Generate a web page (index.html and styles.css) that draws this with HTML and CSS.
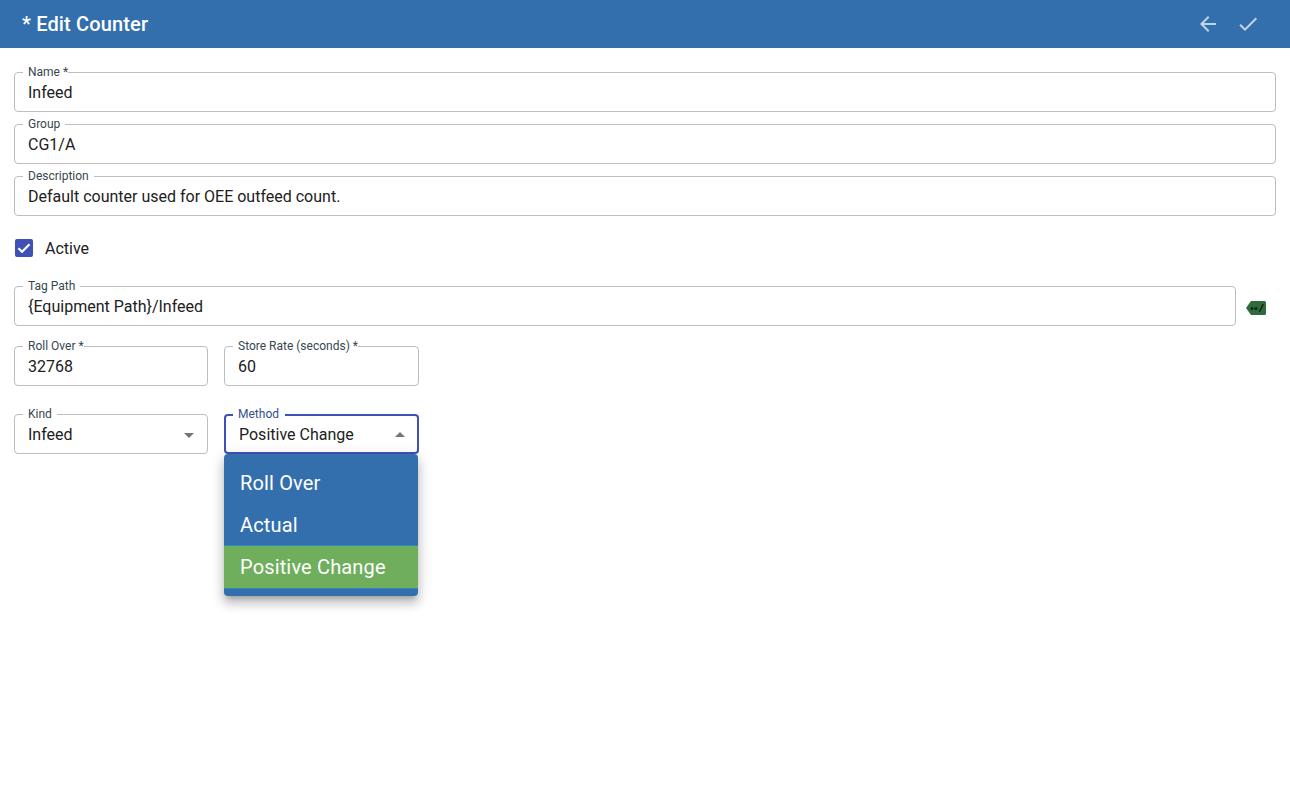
FILE: index.html
```html
<!DOCTYPE html>
<html lang="en">
<head>
<meta charset="utf-8">
<title>Edit Counter</title>
<link rel="stylesheet" href="styles.css">
</head>
<body>
<header class="toolbar">
  <h1 class="toolbar-title">* Edit Counter</h1>
  <div class="toolbar-actions">
    <svg class="toolbar-icon" viewBox="0 0 24 24"><path d="M20 11H7.83l5.59-5.59L12 4l-8 8 8 8 1.41-1.41L7.83 13H20v-2z"/></svg>
    <svg class="toolbar-icon" viewBox="0 0 24 24"><path d="M9 16.17L4.83 12l-1.42 1.41L9 19 21 7l-1.41-1.41z"/></svg>
  </div>
</header>
<main class="form">
  <div class="field field-first"><span class="label label-req">Name<span class="req">*</span></span><span class="value">Infeed</span></div>
  <div class="field field-next"><span class="label">Group</span><span class="value">CG1/A</span></div>
  <div class="field field-next"><span class="label">Description</span><span class="value">Default counter used for OEE outfeed count.</span></div>
  <label class="check-row">
    <span class="checkbox"><svg viewBox="0 0 18 18"><path d="M3.4 9.2l3.7 3.6 7.4-7.6"/></svg></span>
    <span class="check-text">Active</span>
  </label>
  <div class="tag-row">
    <div class="field field-grow"><span class="label">Tag Path</span><span class="value">{Equipment Path}/Infeed</span></div>
    <svg class="tag-icon" viewBox="0 0 20 14">
      <path class="tag-body" d="M0 7L5 0H18.500a1.500 1.500 0 0 1 1.500 1.500V12.500a1.500 1.500 0 0 1-1.500 1.500H5z"/>
      <circle class="tag-mark" cx="6" cy="7.500" r="1.500"/>
      <circle class="tag-mark" cx="10" cy="7.500" r="1.500"/>
      <path class="tag-slash" d="M13.300 11L17.300 3"/>
    </svg>
  </div>
  <div class="pair pair-numbers">
    <div class="field field-left"><span class="label label-req">Roll Over<span class="req">*</span></span><span class="value">32768</span></div>
    <div class="field field-right"><span class="label label-req">Store Rate (seconds)<span class="req">*</span></span><span class="value">60</span></div>
  </div>
  <div class="pair pair-selects">
    <div class="field field-left select"><span class="label">Kind</span><span class="value">Infeed</span>
      <svg class="caret" viewBox="0 0 10 5"><path d="M0 0l5 5 5-5z"/></svg></div>
    <div class="field field-right select focused"><span class="label">Method</span><span class="value">Positive Change</span>
      <svg class="caret" viewBox="0 0 10 5"><path d="M0 5l5-5 5 5z"/></svg>
      <ul class="menu">
        <li class="menu-item">Roll Over</li>
        <li class="menu-item">Actual</li>
        <li class="menu-item selected">Positive Change</li>
      </ul>
    </div>
  </div>
</main>
</body>
</html>
```
FILE: styles.css
```css
* { box-sizing: border-box; }
html, body { margin: 0; height: 100%; background: #fff; }
body { font-family: Roboto, "Liberation Sans", sans-serif; color: #212121; font-size: 16px; overflow: hidden; }

.toolbar { height: 48px; background: #336fad; color: #fff; display: flex; align-items: center; justify-content: space-between; padding: 0 30px 0 22px; }
.toolbar-title { margin: 0; font-size: 20px; font-weight: 500; line-height: 48px; letter-spacing: .15px; }
.toolbar-actions { display: flex; gap: 16px; }
.toolbar-icon { width: 24px; height: 24px; fill: rgba(255,255,255,.7); display: block; }

.form { padding: 0 14px; display: flex; flex-direction: column; }

.field { position: relative; height: 40px; border: 1px solid #bdbdbd; border-radius: 4px; padding: 2px 13px 0; display: flex; align-items: center; background: #fff; }
.field-first { margin-top: 24px; }
.field-next { margin-top: 12px; }
.field-grow { flex: 1; }
.value { font-size: 16px; line-height: 20px; white-space: nowrap; }
.label { position: absolute; left: 8px; top: -8px; font-size: 12px; line-height: 14px; padding: 0 5px; background: #fff; color: #37474f; white-space: nowrap; }
.label-req { padding-right: 0; }
.req { margin-left: 3px; position: relative; }

.check-row { display: flex; align-items: center; height: 32px; margin-top: 16px; padding-left: 1px; }
.checkbox { width: 18px; height: 18px; border-radius: 2px; background: #3f51b5; display: block; }
.checkbox svg { width: 18px; height: 18px; fill: none; stroke: #fff; stroke-width: 2.2; display: block; }
.check-text { margin-left: 12px; font-size: 16px; }

.tag-row { display: flex; align-items: center; margin-top: 22px; gap: 10px; padding-right: 10px; }
.tag-icon { width: 20px; height: 14px; display: block; flex: none; margin-top: 4px; }
.tag-body { fill: #2f6b3c; }
.tag-mark { fill: #0d2412; }
.tag-slash { stroke: #0d2412; stroke-width: 1.5; fill: none; }

.pair { display: flex; gap: 16px; }
.pair-numbers { margin-top: 20px; }
.pair-selects { margin-top: 28px; }
.field-left { width: 194px; }
.field-right { width: 195px; }

.caret { position: absolute; right: 13px; top: 18px; width: 10px; height: 5px; fill: #757575; }
.focused { border: 2px solid #3f51b5; padding: 2px 13px 0 12px; }
.focused .value { margin-left: 1px; }
.focused .label { left: 7px; top: -9px; padding-right: 6px; color: #34508f; }
.focused .caret { top: 16px; right: 12px; }

.menu { position: absolute; left: -2px; top: 38px; width: 194px; margin: 0; padding: 8px 0; list-style: none; background: #336fad; border-radius: 4px; color: #fff; box-shadow: 0 5px 5px -3px rgba(0,0,0,.2), 0 8px 10px 1px rgba(0,0,0,.14), 0 3px 14px 2px rgba(0,0,0,.12); z-index: 2; }
.menu-item { height: 42px; line-height: 42px; padding: 0 16px; font-size: 20px; letter-spacing: .15px; white-space: nowrap; }
.selected { background: #6fae5c; box-shadow: 0 -1px 0 #2f88c0, 0 1px 0 #2f88c0; }
```
